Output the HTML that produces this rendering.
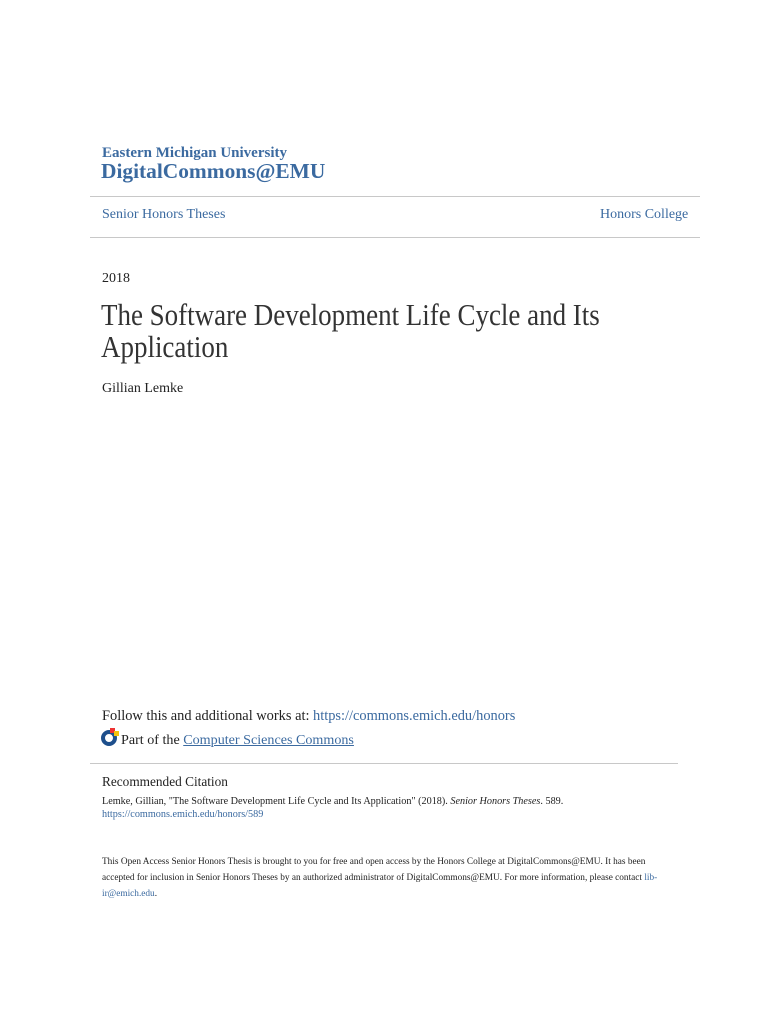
<!DOCTYPE html>
<html><head><meta charset="utf-8"><style>
body{margin:0;background:#fff;width:768px;height:1024px;position:relative;font-family:"Liberation Serif",serif;color:#222;overflow:hidden}
.a{position:absolute;white-space:nowrap}
.b{color:#3b6aa0}
.hr{position:absolute;height:1px;background:#c8c8c8}
</style></head><body>
<div class="a b" style="left:102px;top:145px;font-size:15px;font-weight:bold">Eastern Michigan University</div>
<div class="a b" style="left:101px;top:159px;font-size:21.4px;font-weight:bold">DigitalCommons@EMU</div>
<div class="hr" style="left:90px;top:196px;width:610px"></div>
<div class="a b" style="left:102px;top:207px;font-size:14px">Senior Honors Theses</div>
<div class="a b" style="left:600px;top:207px;font-size:14px">Honors College</div>
<div class="hr" style="left:90px;top:237px;width:610px"></div>
<div class="a" style="left:102px;top:271px;font-size:14px">2018</div>
<div class="a" style="left:101px;top:299px;font-size:31px;line-height:32px;color:#333;transform:scaleX(0.87);transform-origin:left top">The Software Development Life Cycle and Its<br>Application</div>
<div class="a" style="left:102px;top:381px;font-size:14px">Gillian Lemke</div>
<div class="a" style="left:102px;top:708px;font-size:14.4px">Follow this and additional works at: <span class="b">https://commons.emich.edu/honors</span></div>
<svg class="a" style="left:101px;top:727px" width="20" height="20" viewBox="0 0 20 20"><circle cx="8" cy="11" r="6" fill="none" stroke="#1e4f8c" stroke-width="4"/><rect x="9" y="1" width="5" height="5" fill="#e33"/><rect x="13" y="4" width="5" height="5" fill="#f3c20f"/></svg>
<div class="a" style="left:121px;top:732px;font-size:14.1px">Part of the <span class="b" style="text-decoration:underline">Computer Sciences Commons</span></div>
<div class="hr" style="left:90px;top:763px;width:588px"></div>
<div class="a" style="left:102px;top:774px;font-size:13.3px">Recommended Citation</div>
<div class="a" style="left:102px;top:796px;font-size:10.2px">Lemke, Gillian, "The Software Development Life Cycle and Its Application" (2018). <i>Senior Honors Theses</i>. 589.</div>
<div class="a b" style="left:102px;top:809px;font-size:10.2px">https://commons.emich.edu/honors/589</div>
<div class="a" style="left:102px;top:854px;font-size:9.3px;line-height:16px">This Open Access Senior Honors Thesis is brought to you for free and open access by the Honors College at DigitalCommons@EMU. It has been<br>accepted for inclusion in Senior Honors Theses by an authorized administrator of DigitalCommons@EMU. For more information, please contact <span class="b">lib-</span><br><span class="b">ir@emich.edu</span>.</div>
</body></html>
